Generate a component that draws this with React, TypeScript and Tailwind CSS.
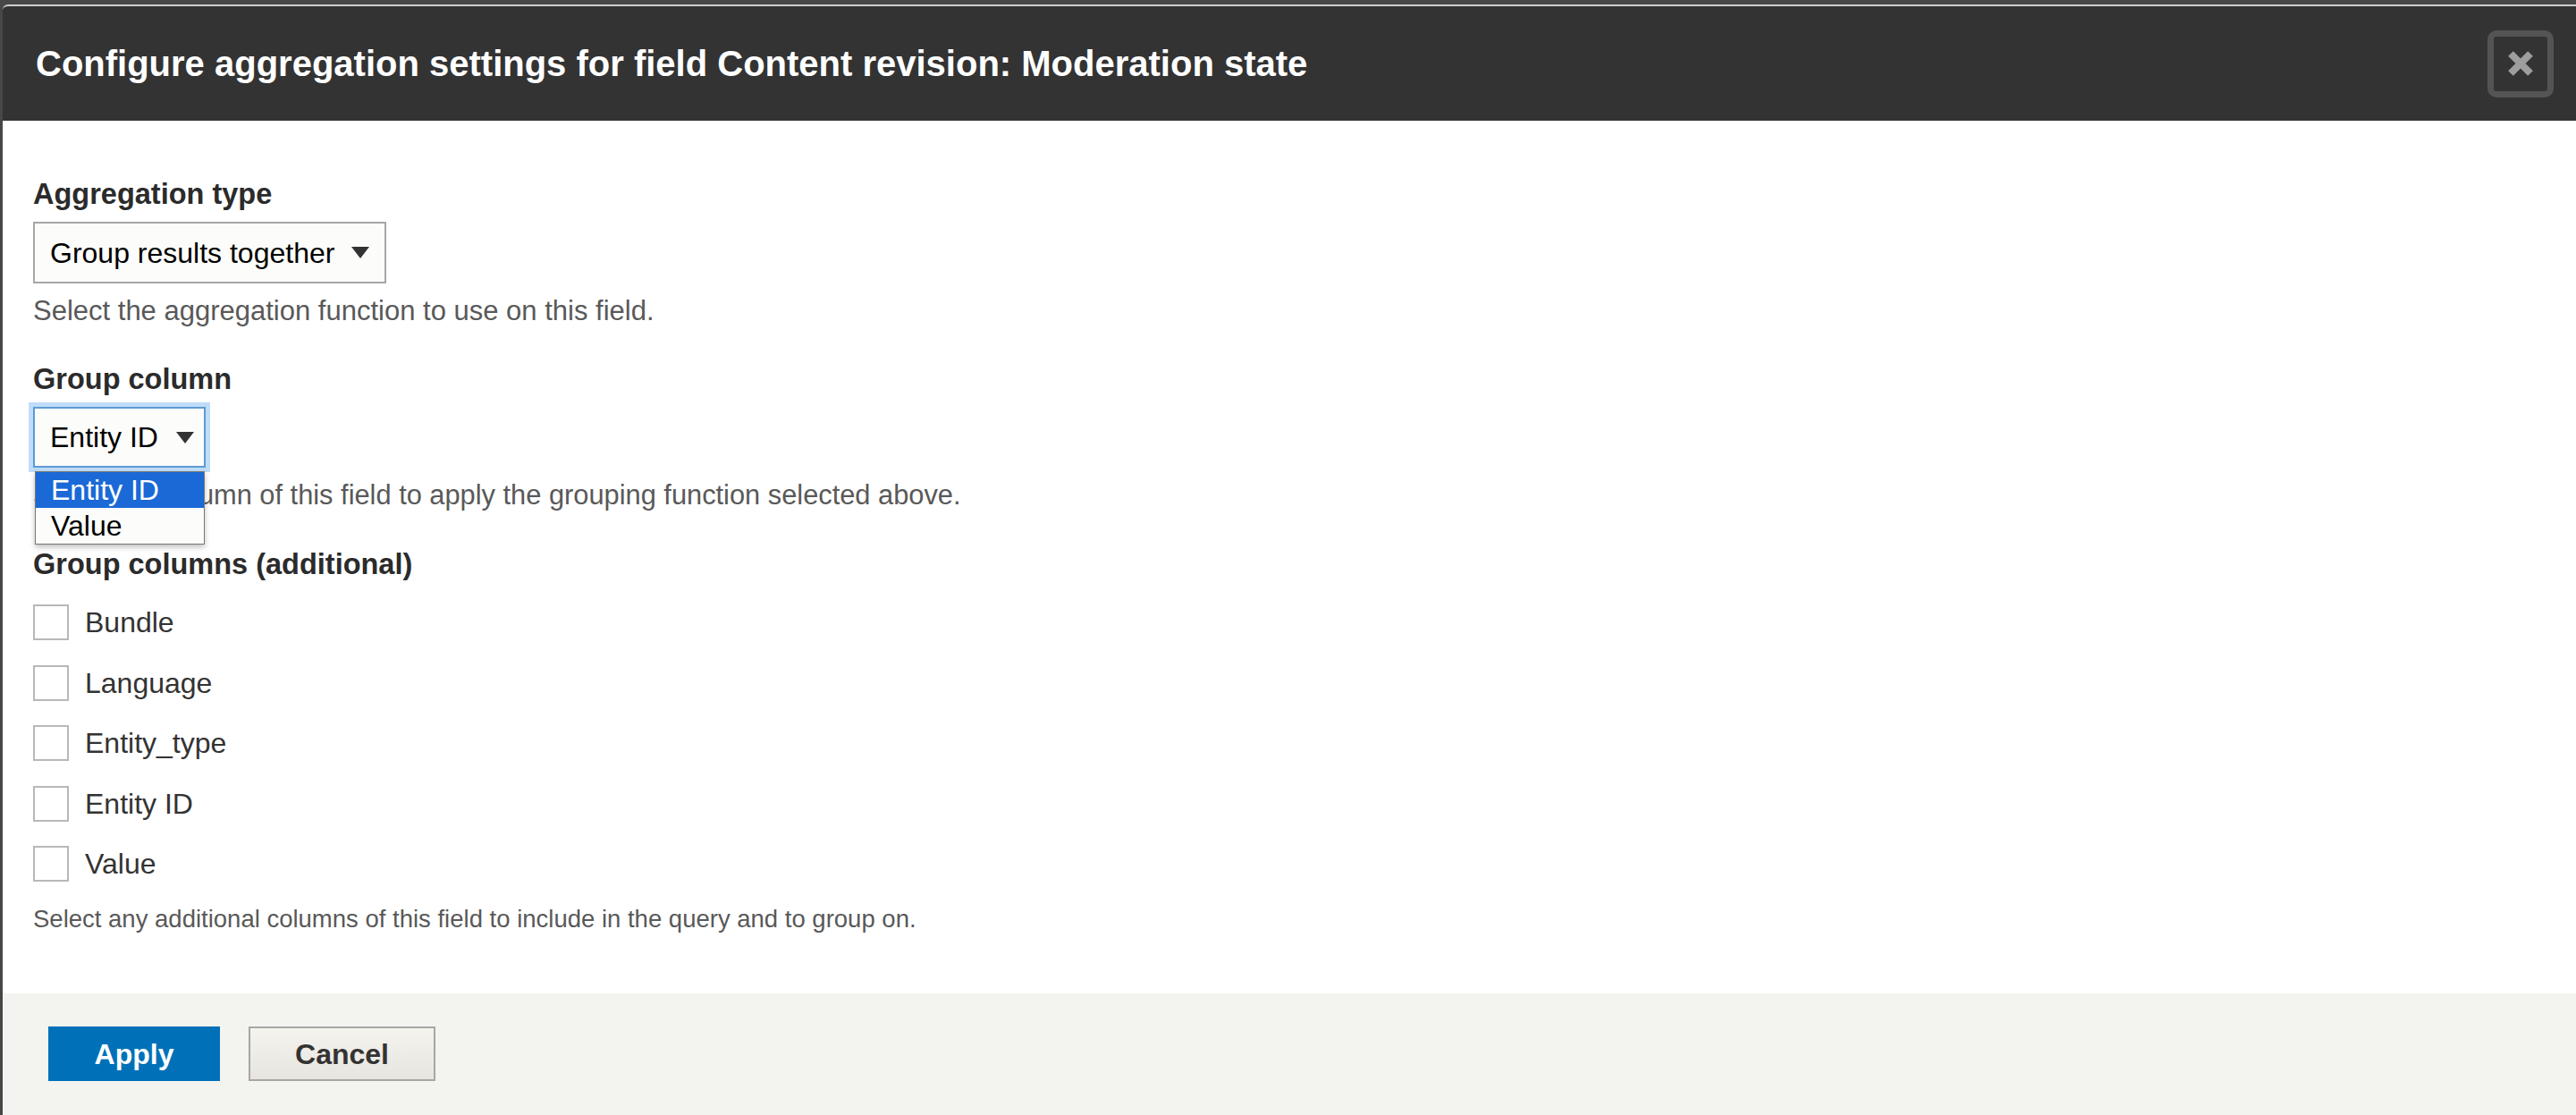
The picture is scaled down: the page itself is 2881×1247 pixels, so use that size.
import React, { useState } from 'react'

const columns = ['Bundle', 'Language', 'Entity_type', 'Entity ID', 'Value']

function Caret() {
  return (
    <svg width="20" height="13" viewBox="0 0 20 13" className="shrink-0">
      <path d="M0 0 L20 0 L10 13 Z" fill="#333333" />
    </svg>
  )
}

function App() {
  const [checked, setChecked] = useState<string[]>([])

  const toggle = (name: string) => {
    setChecked((prev) => (prev.includes(name) ? prev.filter((c) => c !== name) : [...prev, name]))
  }

  return (
    <div className="h-[1247px] w-full overflow-hidden bg-[#474747] pt-[5px] font-['Liberation_Sans',Arial,sans-serif]">
      <div className="ml-[3px] flex h-full flex-col overflow-hidden rounded-tl-[6px] border-t-2 border-[#cfcfcf] bg-white">
        {/* header */}
        <div className="flex h-[128px] shrink-0 items-center justify-between bg-[#333333] pl-[37px] pr-[25px]">
          <h1 className="text-[40px] font-bold leading-[48px] text-white">
            Configure aggregation settings for field Content revision: Moderation state
          </h1>
          <button className="flex h-[75px] w-[74px] items-center justify-center rounded-[10px] border-[7px] border-[#545454]">
            <svg width="32" height="32" viewBox="0 0 32 32">
              <path d="M5 5 L27 27 M27 5 L5 27" stroke="#9e9e9e" strokeWidth="8" strokeLinecap="butt" />
            </svg>
          </button>
        </div>

        {/* body */}
        <div className="flex flex-col pl-[34px] pt-[62px] pb-[65px] text-[#333333]">
          <label className="text-[32.5px] font-bold leading-[40px] text-[#2b2b2b]">Aggregation type</label>
          <div className="mt-[11px] flex h-[69px] w-[395px] items-center justify-between border-2 border-[#a6a6a6] bg-[#fcfcfa] pl-[17px] pr-[17px]">
            <span className="text-[32px] leading-[40px] text-black">Group results together</span>
            <Caret />
          </div>
          <p className="mt-[11px] text-[31px] leading-[40px] text-[#595959]">
            Select the aggregation function to use on this field.
          </p>

          <label className="mt-[36px] text-[32.5px] font-bold leading-[40px] text-[#2b2b2b]">Group column</label>
          <div className="relative mt-[11px] w-[193px]">
            <div className="flex h-[68px] w-[193px] items-center justify-between border-2 border-[#5d9bd3] bg-[#fcfcfa] pl-[17px] pr-[11px] outline-[5px] outline-solid outline-[#bfdcf8]">
              <span className="text-[32px] leading-[40px] text-black">Entity ID</span>
              <Caret />
            </div>
            <ul className="absolute left-[2px] top-[72px] z-10 w-[190px] border border-[#767676] bg-[#fcfcfa] shadow-[0_3px_6px_rgba(0,0,0,0.25)]">
              <li className="h-[40px] bg-[#1a69d6] pl-[17px] text-[32px] leading-[40px] text-white">Entity ID</li>
              <li className="h-[40px] pl-[17px] text-[32px] leading-[40px] text-black">Value</li>
            </ul>
          </div>
          <p className="mt-[11px] text-[30.8px] leading-[40px] text-[#595959]">
            Select the column of this field to apply the grouping function selected above.
          </p>

          <label className="mt-[37px] text-[32.5px] font-bold leading-[40px] text-[#2b2b2b]">Group columns (additional)</label>
          <div className="mt-[25px] flex flex-col gap-[27.5px]">
            {columns.map((col) => (
              <label key={col} className="flex h-[40px] cursor-pointer items-center gap-[18px]" onClick={() => toggle(col)}>
                <span className="flex h-[40px] w-[40px] items-center justify-center border-2 border-[#b8b8b8] bg-white">
                  {checked.includes(col) && <span className="h-[20px] w-[20px] bg-[#0071b8]" />}
                </span>
                <span className="text-[32px] leading-[40px] text-[#333333]">{col}</span>
              </label>
            ))}
          </div>
          <p className="mt-[24px] text-[27.5px] leading-[36px] text-[#595959]">
            Select any additional columns of this field to include in the query and to group on.
          </p>
        </div>

        {/* footer */}
        <div className="flex flex-1 gap-[32px] bg-[#f3f3ef] pl-[51px] pt-[37px]">
          <button className="h-[61px] w-[192px] bg-[#0071b8] text-[32px] font-bold text-white">Apply</button>
          <button className="h-[61px] w-[209px] border-2 border-[#a6a6a6] bg-gradient-to-b from-[#f4f3ee] to-[#e7e5de] text-[32px] font-bold text-[#333333]">
            Cancel
          </button>
        </div>
      </div>
    </div>
  )
}

export default App
